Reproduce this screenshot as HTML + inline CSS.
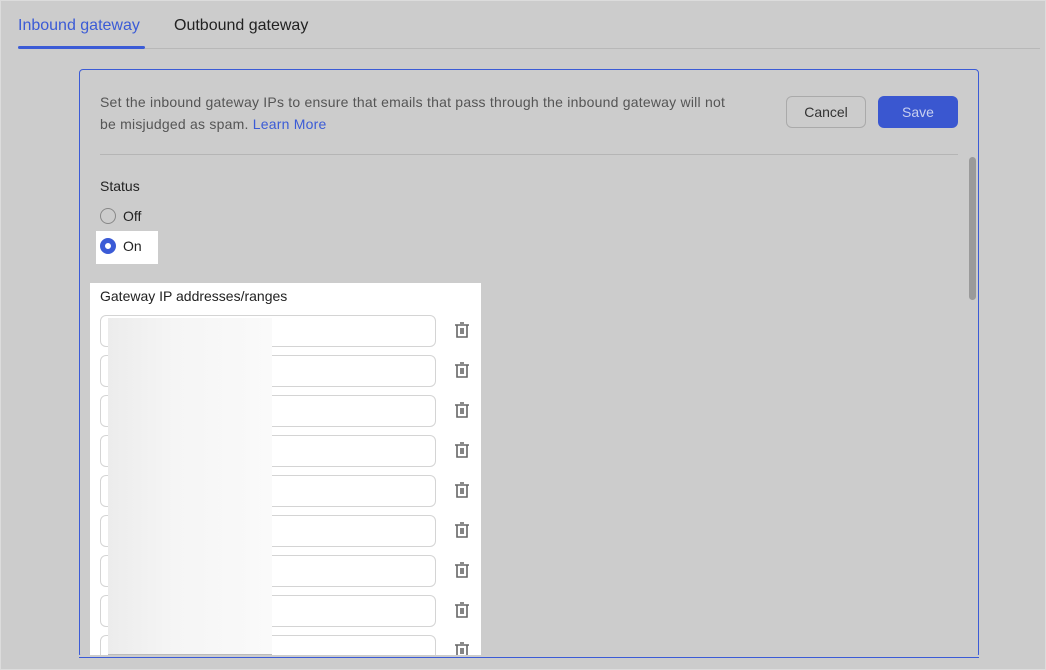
<!DOCTYPE html>
<html><head><meta charset="utf-8"><style>
*{box-sizing:border-box;margin:0;padding:0}
html,body{width:1046px;height:670px;overflow:hidden}
body{background:#cccccc;font-family:"Liberation Sans",sans-serif;position:relative}
.abs{position:absolute}
.tab{font-size:16px;top:17px}
.inp{position:absolute;left:100px;width:336px;height:32px;border:1px solid #d4d4d4;border-radius:6px;background:#fff}
</style></head><body>
<div class="abs" style="left:0;top:0;width:1046px;height:670px;border:1px solid #dcdcdc;z-index:9"></div>
<div class="abs tab" style="left:18px;color:#3b5bd6">Inbound gateway</div>
<div class="abs tab" style="left:174px;color:#222">Outbound gateway</div>
<div class="abs" style="left:18px;top:46px;width:127px;height:3px;background:#3b5bd6;border-radius:2px"></div>
<div class="abs" style="left:145px;top:48px;width:895px;height:1px;background:#b8b8b8"></div>
<div class="abs" style="left:79px;top:69px;width:900px;height:589px;border:1px solid #3b5bd6;border-radius:4px"></div>
<div class="abs" style="left:100px;top:91px;width:636px;font-size:14px;line-height:22px;color:#555;letter-spacing:0.22px">Set the inbound gateway IPs to ensure that emails that pass through the inbound gateway will not<br>be misjudged as spam. <span style="color:#3b5bd6">Learn More</span></div>
<div class="abs" style="left:786px;top:96px;width:80px;height:32px;border:1px solid #aaa;border-radius:6px;font-size:14px;color:#333;text-align:center;line-height:30px">Cancel</div>
<div class="abs" style="left:878px;top:96px;width:80px;height:32px;background:#3a57d0;border-radius:6px;font-size:14px;color:#c8d0f0;text-align:center;line-height:32px">Save</div>
<div class="abs" style="left:100px;top:154px;width:858px;height:1px;background:#b5b5b5"></div>
<div class="abs" style="left:969px;top:157px;width:7px;height:143px;background:#9a9a9a;border-radius:4px"></div>
<div class="abs" style="left:100px;top:178px;font-size:14px;color:#222">Status</div>
<div class="abs" style="left:100px;top:208px;width:16px;height:16px;border:1px solid #888;border-radius:50%"></div>
<div class="abs" style="left:123px;top:208px;font-size:14px;color:#222">Off</div>
<div class="abs" style="left:96px;top:231px;width:62px;height:33px;background:#fff"></div>
<div class="abs" style="left:100px;top:238px;width:16px;height:16px;border:5px solid #3b5bd6;border-radius:50%;background:#fff"></div>
<div class="abs" style="left:123px;top:238px;font-size:14px;color:#222">On</div>
<div class="abs" style="left:90px;top:283px;width:391px;height:372px;background:#fff"></div>
<div class="abs" style="left:100px;top:288px;font-size:14px;color:#222">Gateway IP addresses/ranges</div>
<div class="inp" style="top:315px"></div><div class="inp" style="top:355px"></div><div class="inp" style="top:395px"></div><div class="inp" style="top:435px"></div><div class="inp" style="top:475px"></div><div class="inp" style="top:515px"></div><div class="inp" style="top:555px"></div><div class="inp" style="top:595px"></div><div class="inp" style="top:635px;height:30px"></div>
<svg class="abs" style="left:0;top:0" width="1046" height="670">
<defs><g id="t" fill="none" stroke="#666" stroke-width="1.6"><path d="M1 3h14M6 1h4M3 3v12h10V3M7 6v6M9 6v6"/></g></defs>
<use href="#t" x="454" y="322"/><use href="#t" x="454" y="362"/><use href="#t" x="454" y="402"/><use href="#t" x="454" y="442"/><use href="#t" x="454" y="482"/><use href="#t" x="454" y="522"/><use href="#t" x="454" y="562"/><use href="#t" x="454" y="602"/><use href="#t" x="454" y="642"/>
</svg>
<div class="abs" style="left:108px;top:318px;width:164px;height:340px;background:linear-gradient(90deg,#ececec,#f5f5f5 40%,#fafafa)"></div>
<div class="abs" style="left:108px;top:654px;width:164px;height:4px;background:#bbb"></div>
<div class="abs" style="left:0;top:655px;width:1046px;height:15px;background:#ccc"></div>
<div class="abs" style="left:79px;top:657px;width:900px;height:1px;background:#3b5bd6"></div>
</body></html>
